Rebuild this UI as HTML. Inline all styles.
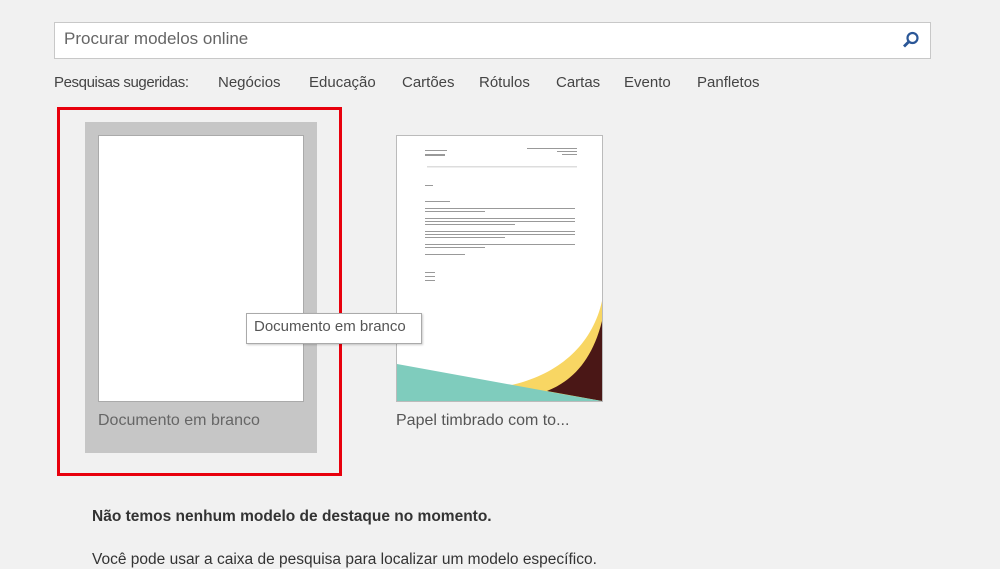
<!DOCTYPE html>
<html><head><meta charset="utf-8"><style>
body{margin:0;width:1000px;height:561px;overflow:hidden;background:#f1f1f1;font-family:"Segoe UI","Liberation Sans",sans-serif;position:relative}
.abs{position:absolute}
.s{position:absolute;top:74px;font-size:15px;color:#444;white-space:nowrap}
</style></head><body>
<div class="abs" style="left:54px;top:22px;width:875px;height:35px;background:#fff;border:1px solid #c8c8c8"></div>
<div class="abs" style="left:64px;top:29px;font-size:17px;color:#666">Procurar modelos online</div>
<svg class="abs" style="left:901px;top:30px" width="20" height="20" viewBox="0 0 20 20"><circle cx="11.5" cy="8" r="5" fill="none" stroke="#2b5797" stroke-width="2.2"/><line x1="8" y1="11.5" x2="3" y2="16.5" stroke="#2b5797" stroke-width="2.8"/></svg>
<span class="s" style="left:54px;letter-spacing:-0.4px">Pesquisas sugeridas:</span>
<span class="s" style="left:218px">Negócios</span>
<span class="s" style="left:309px">Educação</span>
<span class="s" style="left:402px">Cartões</span>
<span class="s" style="left:479px">Rótulos</span>
<span class="s" style="left:556px">Cartas</span>
<span class="s" style="left:624px">Evento</span>
<span class="s" style="left:697px">Panfletos</span>
<div class="abs" style="left:85px;top:122px;width:232px;height:331px;background:#c6c6c6"></div>
<div class="abs" style="left:98px;top:135px;width:204px;height:265px;background:#fff;border:1px solid #aaa"></div>
<div class="abs" style="left:98px;top:412px;font-size:16px;color:#666">Documento em branco</div>
<div class="abs" style="left:57px;top:107px;width:279px;height:363px;border:3.5px solid #e8000d"></div>
<div class="abs" style="left:396px;top:135px;width:205px;height:265px;background:#fff;border:1px solid #bbb;overflow:hidden">
<svg width="205" height="265" viewBox="0 0 205 265" style="position:absolute;left:0;top:0">
<path d="M205 165 C195 210 160 240 110 250 L205 265Z" fill="#f8d663"/>
<path d="M205 185 C195 225 175 245 150 255 L205 265Z" fill="#4a1716"/>
<path d="M0 228 L165 258 L205 265 L0 265Z" fill="#7fccbd"/>
<rect x="30" y="30" width="150" height="1.5" fill="#ddd"/>
<g fill="#999"><rect x="28" y="14" width="22" height="1"/><rect x="28" y="18" width="20" height="2"/><rect x="130" y="12" width="50" height="1"/><rect x="160" y="15" width="20" height="1"/><rect x="165" y="18" width="15" height="1"/>
<rect x="28" y="49" width="8" height="1"/><rect x="28" y="65" width="25" height="1"/>
<rect x="28" y="72" width="150" height="1"/><rect x="28" y="75" width="60" height="1"/>
<rect x="28" y="82" width="150" height="1"/><rect x="28" y="85" width="150" height="1"/><rect x="28" y="88" width="90" height="1"/>
<rect x="28" y="95" width="150" height="1"/><rect x="28" y="98" width="150" height="1"/><rect x="28" y="101" width="80" height="1"/>
<rect x="28" y="108" width="150" height="1"/><rect x="28" y="111" width="60" height="1"/><rect x="28" y="118" width="40" height="1"/>
<rect x="28" y="136" width="10" height="1"/><rect x="28" y="140" width="10" height="1"/><rect x="28" y="144" width="10" height="1"/></g>
</svg></div>
<div class="abs" style="left:396px;top:412px;font-size:16px;color:#555">Papel timbrado com to...</div>
<div class="abs" style="left:246px;top:313px;width:174px;height:29px;background:#fff;border:1px solid #aaa;box-shadow:1px 1px 2px rgba(0,0,0,.2)"></div>
<div class="abs" style="left:254px;top:318px;font-size:15px;color:#555">Documento em branco</div>
<div class="abs" style="left:92px;top:508px;font-size:15.5px;font-weight:bold;color:#333">Não temos nenhum modelo de destaque no momento.</div>
<div class="abs" style="left:92px;top:551px;font-size:15.5px;color:#333">Você pode usar a caixa de pesquisa para localizar um modelo específico.</div>
</body></html>
